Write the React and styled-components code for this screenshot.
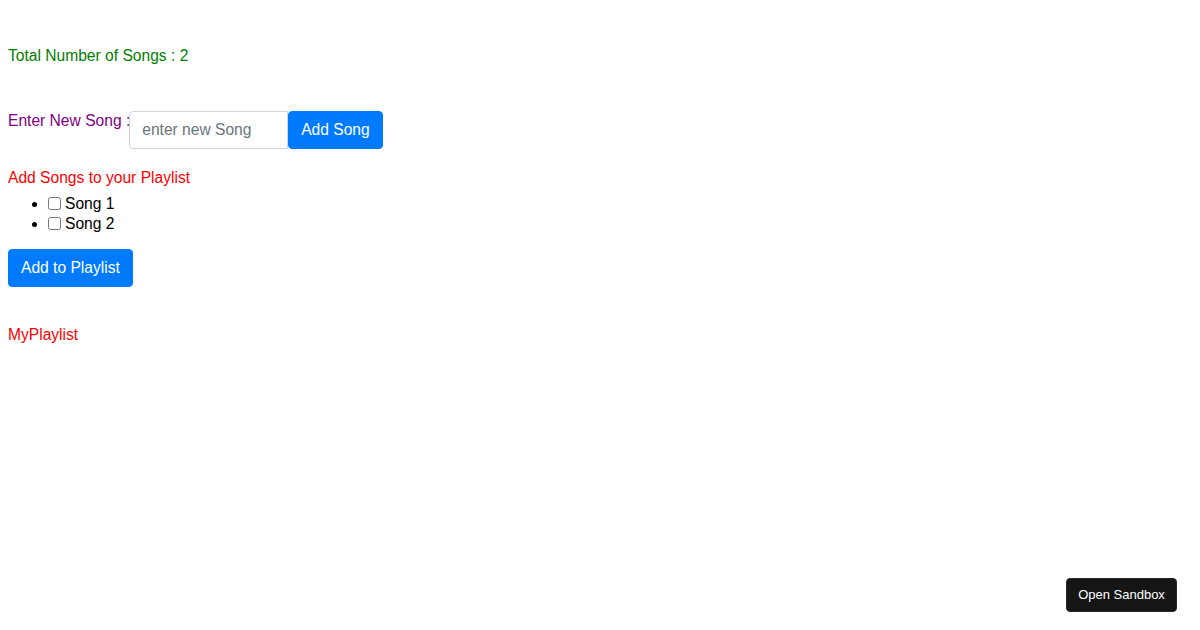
import React, {useState} from "react";
import styled, {createGlobalStyle} from 'styled-components';

const GlobalStyle = createGlobalStyle`
  body {
    margin: 0;
    background: #ffffff;
    font-family: "Liberation Sans", Arial, sans-serif;
    font-size: 15.6px;
    color: #000000;
  }
`;

const Page = styled.div`
  padding: 0 8px;
`;

const Line = styled.div`
  color: ${props => props.color};
  line-height: 24px;
  margin-top: ${props => props.mt}px;
`;

const FormRow = styled.div`
  display: flex;
  align-items: flex-start;
  margin-top: 40px;
  height: 42px;
`;

const Label = styled.label`
  color: purple;
  line-height: 24px;
  padding-top: 1px;
  margin-right: -1px;
`;

const Input = styled.input`
  box-sizing: border-box;
  margin: 3px 0 0 0;
  width: 159px;
  height: 38px;
  padding: 6px 12px;
  font-family: inherit;
  font-size: 15.6px;
  color: #495057;
  border: 1px solid #ced4da;
  border-radius: 4px 0 0 4px;
  outline: none;
  &::placeholder {
    color: #6c757d;
  }
`;

const Button = styled.button`
  box-sizing: border-box;
  height: 38px;
  margin: ${props => props.inGroup ? '3px 0 0 0' : '15px 0 0 0'};
  padding: 6px 12px;
  font-family: inherit;
  font-size: 15.6px;
  line-height: 24px;
  color: #ffffff;
  background: #007bff;
  border: 1px solid #007bff;
  border-radius: 4px;
  cursor: pointer;
`;

const SongList = styled.ul`
  margin: 4px 0 0 0;
  padding-left: 40px;
`;

const SongItem = styled.li`
  line-height: 20px;
  height: 20px;
`;

const Check = styled.input`
  margin: 0 4px 0 0;
  width: 13px;
  height: 13px;
  vertical-align: -1px;
`;

const SandboxButton = styled.a`
  position: fixed;
  right: 23px;
  bottom: 18px;
  box-sizing: border-box;
  width: 111px;
  height: 34px;
  display: flex;
  align-items: center;
  justify-content: center;
  background: #151515;
  color: #ffffff;
  font-size: 13px;
  border-radius: 4px;
  border: 1px solid #2a2a2a;
  text-decoration: none;
  padding-bottom: 2px;
`;

const App = () => {
    const [songs] = useState(["Song 1", "Song 2"])

    return (
        <Page>
            <GlobalStyle/>
            <Line color="green" mt={44}>Total Number of Songs : {songs.length}</Line>
            <FormRow>
                <Label>Enter New Song :</Label>
                <Input placeholder="enter new Song"/>
                <Button inGroup>Add Song</Button>
            </FormRow>
            <Line color="red" mt={16}>Add Songs to your Playlist</Line>
            <SongList>
                {
                    songs.map(s => (
                        <SongItem key={s}>
                            <Check type="checkbox"/>{s}
                        </SongItem>
                    ))
                }
            </SongList>
            <Button>Add to Playlist</Button>
            <Line color="red" mt={36}>MyPlaylist</Line>
            <SandboxButton href="#">Open Sandbox</SandboxButton>
        </Page>
    );
};

export default App;
